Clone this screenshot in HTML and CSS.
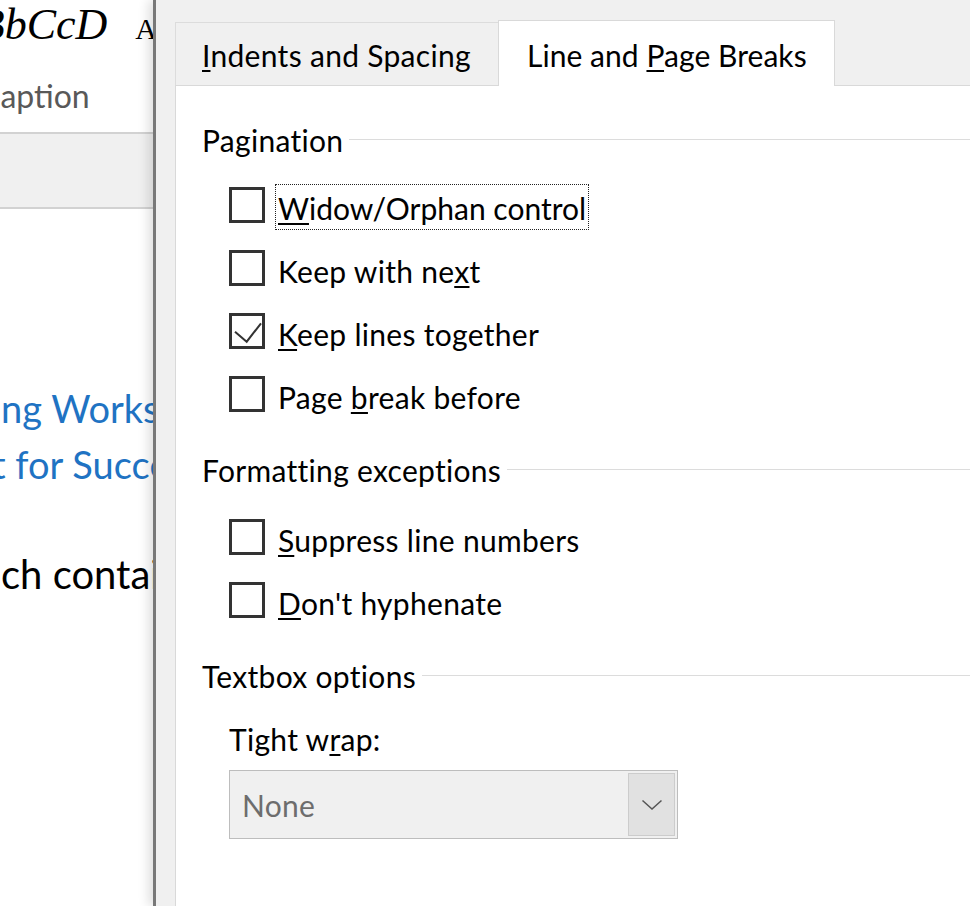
FILE: index.html
```html
<!DOCTYPE html>
<html lang="en">
<head>
  <meta charset="UTF-8" />
  <title>Paragraph - Line and Page Breaks</title>
  <link rel="stylesheet" href="styles.css">
</head>
<body>

<div class="screen">

  <!-- Word document behind the dialog -->
  <div class="doc">
    <div class="gallery">
      <span class="gallery-sample">AaBbCcD</span>
      <span class="gallery-next">A</span>
    </div>
    <div class="style-name">Caption</div>
    <div class="doc-band"></div>
    <div class="doc-page">
      <p class="doc-heading first">ng Workspace</p>
      <p class="doc-heading cut">t for Success</p>
      <p class="doc-body">ch contains</p>
    </div>
  </div>

  <!-- Paragraph dialog -->
  <div class="dialog">
    <div class="tabs">
      <div class="tab"><u>I</u>ndents and Spacing</div>
      <div class="tab tab-active">Line and <u>P</u>age Breaks</div>
    </div>

    <div class="panel">
      <div class="group-title">Pagination</div>
      <div class="options">
        <div class="option">
          <span class="check"></span>
          <span class="option-text focused"><u>W</u>idow/Orphan control</span>
        </div>
        <div class="option">
          <span class="check"></span>
          <span class="option-text">Keep with ne<u>x</u>t</span>
        </div>
        <div class="option">
          <span class="check">
            <svg width="30" height="30" viewBox="0 0 30 30"><path d="M3 15.7 L14.7 25.7 L29 7.3" fill="none" stroke="#333" stroke-width="2"/></svg>
          </span>
          <span class="option-text"><u>K</u>eep lines together</span>
        </div>
        <div class="option">
          <span class="check"></span>
          <span class="option-text">Page <u>b</u>reak before</span>
        </div>
      </div>

      <div class="group-title spaced">Formatting exceptions</div>
      <div class="options spaced">
        <div class="option">
          <span class="check"></span>
          <span class="option-text"><u>S</u>uppress line numbers</span>
        </div>
        <div class="option">
          <span class="check"></span>
          <span class="option-text"><u>D</u>on't hyphenate</span>
        </div>
      </div>

      <div class="group-title spaced">Textbox options</div>
      <div class="field-label">Tight w<u>r</u>ap:</div>
      <div class="select">
        <span class="select-value">None</span>
        <span class="select-button">
          <svg width="22" height="12" viewBox="0 0 22 12"><path d="M1.5 1.5 L11 10 L20.5 1.5" fill="none" stroke="#555" stroke-width="1.5"/></svg>
        </span>
      </div>
    </div>
  </div>

</div>

</body>
</html>
```

FILE: styles.css
```css
* {
  box-sizing: border-box;
}
body {
  margin: 0;
  width: 970px;
  height: 906px;
  overflow: hidden;
  background: #fff;
  font-family: Lato, "Noto Sans", sans-serif;
  color: #000;
}
u {
  text-decoration-thickness: 2px;
  text-underline-offset: 3px;
}
.screen {
  display: flex;
  height: 906px;
}

/* document */
.doc {
  flex: 0 0 153px;
  overflow: hidden;
  background: #fff;
  white-space: nowrap;
}
.gallery {
  display: flex;
  justify-content: flex-end;
  align-items: baseline;
  gap: 28px;
  height: 50px;
  padding-top: 3px;
  overflow: hidden;
}
.gallery-sample {
  font-family: "Liberation Serif", serif;
  font-style: italic;
  font-size: 44px;
  line-height: 44px;
}
.gallery-next {
  font-family: "Liberation Serif", serif;
  font-size: 30px;
  line-height: 30px;
  margin-right: -4px;
}
.style-name {
  margin-top: 26px;
  height: 56px;
  font-size: 32px;
  line-height: 40px;
  color: #595959;
  text-indent: -21px;
}
.doc-band {
  height: 77px;
  background: #f0f0f0;
  border-top: 2px solid #d2d2d2;
  border-bottom: 2px solid #d2d2d2;
}
.doc-page p {
  margin: 0;
}
.doc-heading {
  font-size: 38px;
  line-height: 56px;
  color: #1f73c3;
  padding-left: 1px;
}
.doc-page .first {
  margin-top: 171px;
}
.doc-heading.cut {
  text-indent: -9px;
}
.doc-page .doc-body {
  margin-top: 57px;
  font-size: 40px;
  line-height: 50px;
  padding-left: 1px;
}

/* dialog */
.dialog {
  flex: 0 0 900px;
  position: relative;
  z-index: 1;
  background: #f0f0f0;
  border-left: 3px solid #787878;
  box-shadow: -5px 0 10px rgba(0, 0, 0, 0.12);
  padding: 20px 0 0 19px;
}
.tabs {
  display: flex;
  align-items: flex-end;
  height: 65px;
}
.tab {
  width: 323px;
  height: 63px;
  padding: 12px 0 0 26px;
  border-top: 1px solid #dcdcdc;
  border-left: 1px solid #dcdcdc;
  font-size: 30px;
  letter-spacing: 0.3px;
  line-height: 40px;
}
.tab-active {
  position: relative;
  width: 337px;
  height: 66px;
  margin-bottom: -1px;
  padding: 14px 0 0 28px;
  background: #fff;
  border: 1px solid #d9d9d9;
  border-bottom: none;
  letter-spacing: 0.05px;
}
.panel {
  height: 900px;
  background: #fff;
  border: 1px solid #d9d9d9;
  padding: 34px 0 0 26px;
}
.group-title {
  display: flex;
  align-items: center;
  gap: 6px;
  font-size: 30px;
  letter-spacing: 0.3px;
  line-height: 40px;
}
.group-title::after {
  content: "";
  flex: 1;
  height: 1px;
  margin-top: -2px;
  background: #dcdcdc;
}
.group-title.spaced {
  margin-top: 20px;
}
.options {
  margin: 18px 0 0 27px;
}
.options.spaced {
  margin-top: 20px;
}
.option {
  display: flex;
  align-items: flex-start;
  height: 63px;
}
.check {
  flex: none;
  width: 36px;
  height: 36px;
  margin-top: 9px;
  border: 3px solid #333;
  background: #fff;
}
.check svg {
  display: block;
}
.option-text {
  height: 44px;
  margin: 7px 0 0 11px;
  padding: 2px 2px 0;
  font-size: 30px;
  letter-spacing: 0.3px;
  line-height: 42px;
}
.focused {
  outline: 1px dotted #222;
  letter-spacing: 0;
}
.field-label {
  margin: 23px 0 0 27px;
  font-size: 30px;
  letter-spacing: 0.3px;
  line-height: 40px;
}
.select {
  display: flex;
  align-items: center;
  width: 449px;
  height: 69px;
  margin: 11px 0 0 27px;
  padding: 2px;
  background: #f0f0f0;
  border: 1px solid #bdbdbd;
}
.select-value {
  flex: 1;
  padding-left: 10px;
  font-size: 30px;
  letter-spacing: 0.3px;
  line-height: 40px;
  color: #6d6d6d;
}
.select-button {
  display: flex;
  align-items: center;
  justify-content: center;
  width: 47px;
  height: 63px;
  background: #e1e1e1;
  border: 1px solid #cccccc;
}
```
